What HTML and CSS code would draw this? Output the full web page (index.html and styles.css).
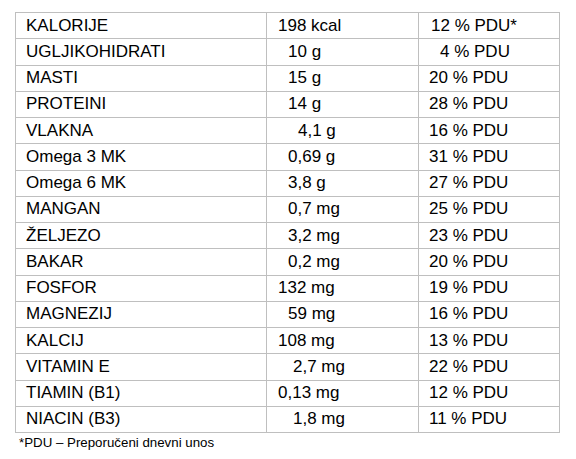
FILE: index.html
```html
<!DOCTYPE html>
<html lang="hr">
<head>
<meta charset="utf-8">
<title>Nutritivne vrijednosti</title>
<link rel="stylesheet" href="styles.css">
</head>
<body>
<div class="wrap">
<table class="nut">
<colgroup><col class="c1"><col class="c2"><col class="c3"></colgroup>
<tbody>
<tr><td>KALORIJE</td><td class="p0">198 kcal</td><td class="q2">12 % PDU*</td></tr>
<tr><td>UGLJIKOHIDRATI</td><td class="p1">10 g</td><td class="q3">4 % PDU</td></tr>
<tr><td>MASTI</td><td class="p1">15 g</td><td class="q1">20 % PDU</td></tr>
<tr><td>PROTEINI</td><td class="p1">14 g</td><td class="q1">28 % PDU</td></tr>
<tr><td>VLAKNA</td><td class="p3">4,1 g</td><td class="q1">16 % PDU</td></tr>
<tr><td>Omega 3 MK</td><td class="p1">0,69 g</td><td class="q1">31 % PDU</td></tr>
<tr><td>Omega 6 MK</td><td class="p1">3,8 g</td><td class="q1">27 % PDU</td></tr>
<tr><td>MANGAN</td><td class="p1">0,7 mg</td><td class="q1">25 % PDU</td></tr>
<tr><td>ŽELJEZO</td><td class="p1">3,2 mg</td><td class="q1">23 % PDU</td></tr>
<tr><td>BAKAR</td><td class="p1">0,2 mg</td><td class="q1">20 % PDU</td></tr>
<tr><td>FOSFOR</td><td class="p0">132 mg</td><td class="q1">19 % PDU</td></tr>
<tr><td>MAGNEZIJ</td><td class="p1">59 mg</td><td class="q1">16 % PDU</td></tr>
<tr><td>KALCIJ</td><td class="p0">108 mg</td><td class="q1">13 % PDU</td></tr>
<tr><td>VITAMIN E</td><td class="p2">2,7 mg</td><td class="q1">22 % PDU</td></tr>
<tr><td>TIAMIN (B1)</td><td class="p0">0,13 mg</td><td class="q1">12 % PDU</td></tr>
<tr><td>NIACIN (B3)</td><td class="p2">1,8 mg</td><td class="q1">11 % PDU</td></tr>
</tbody>
</table>
<p class="note">*PDU – Preporučeni dnevni unos</p>
</div>
</body>
</html>
```
FILE: styles.css
```css
html, body {
  margin: 0;
  padding: 0;
  background: #ffffff;
}
body {
  font-family: "Liberation Sans", Arial, sans-serif;
  color: #000000;
}
.wrap {
  padding: 12px 0 0 15px;
}
.nut {
  border-collapse: collapse;
  table-layout: fixed;
  width: 544px;
  font-size: 17px;
}
.c1 { width: 251px; }
.c2 { width: 152px; }
.c3 { width: 141px; }
.nut td {
  border: 1px solid #bfbfbf;
  height: 25.25px;
  padding: 0 0 0 10px;
  line-height: 20px;
  white-space: nowrap;
  vertical-align: middle;
}
.nut td.p0 { padding-left: 11px; }
.nut td.p1 { padding-left: 21px; }
.nut td.p2 { padding-left: 26px; }
.nut td.p3 { padding-left: 31px; }
.nut td.q1 { padding-left: 10px; }
.nut td.q2 { padding-left: 12px; }
.nut td.q3 { padding-left: 21px; }
.note {
  margin: 2px 0 0 4px;
  font-size: 13.3px;
  line-height: 16px;
}
```
